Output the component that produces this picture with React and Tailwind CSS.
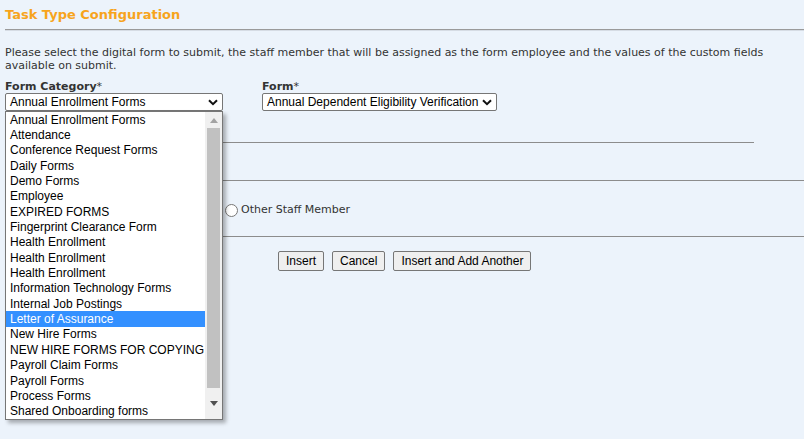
import { useState } from "react";

const categories = [
  "Annual Enrollment Forms",
  "Attendance",
  "Conference Request Forms",
  "Daily Forms",
  "Demo Forms",
  "Employee",
  "EXPIRED FORMS",
  "Fingerprint Clearance Form",
  "Health Enrollment",
  "Health Enrollment",
  "Health Enrollment",
  "Information Technology Forms",
  "Internal Job Postings",
  "Letter of Assurance",
  "New Hire Forms",
  "NEW HIRE FORMS FOR COPYING",
  "Payroll Claim Forms",
  "Payroll Forms",
  "Process Forms",
  "Shared Onboarding forms",
];

const arial = { fontFamily: '"Liberation Sans", Arial, sans-serif' };

function Chevron() {
  return (
    <svg width="10" height="7" viewBox="0 0 10 7" className="shrink-0">
      <path d="M1 1.2 L5 5.2 L9 1.2" fill="none" stroke="#111" strokeWidth="2" />
    </svg>
  );
}

function FakeSelect({ value, width }) {
  return (
    <div
      className={`flex h-[18px] items-center justify-between gap-[4px] rounded-[2px] border border-[#767676] bg-white pl-[4px] pr-[4px] text-[12px] leading-none text-black ${width}`}
      style={arial}
    >
      <span className="whitespace-nowrap">{value}</span>
      <Chevron />
    </div>
  );
}

function DropdownList({ highlighted }) {
  return (
    <div
      className="absolute left-0 top-[18px] z-10 flex h-[309px] w-[218px] border border-[#767676] bg-white shadow-[3px_3px_4px_rgba(0,0,0,0.3)]"
      style={arial}
    >
      <div className="flex flex-1 flex-col">
        {categories.map((c, i) => (
          <div
            key={i}
            className={`flex h-[15.35px] items-center whitespace-nowrap pl-[4px] text-[12px] leading-none ${
              i === highlighted ? "bg-[#3390ff] text-white" : "text-black"
            }`}
          >
            {c}
          </div>
        ))}
      </div>
      <div className="flex w-[17px] flex-col bg-[#f0f0f0]">
        <div className="flex h-[16px] items-center justify-center">
          <svg width="8" height="5" viewBox="0 0 8 5">
            <path d="M0 5 L4 0 L8 5 Z" fill="#a3a3a3" />
          </svg>
        </div>
        <div className="mx-[2px] h-[260px] bg-[#c1c1c1]" />
        <div className="flex flex-1 items-center justify-center">
          <svg width="8" height="5" viewBox="0 0 8 5">
            <path d="M0 0 L8 0 L4 5 Z" fill="#505050" />
          </svg>
        </div>
      </div>
    </div>
  );
}

function Button({ children }) {
  return (
    <button
      type="button"
      className="h-[20px] rounded-[2px] border border-[#767676] bg-[#efefef] px-[7px] text-[12px] leading-none text-black"
      style={arial}
    >
      {children}
    </button>
  );
}

export default function App() {
  const [staff, setStaff] = useState("current");

  return (
    <div
      className="h-[439px] w-[804px] overflow-hidden bg-[#ecf3fb] text-[11px] text-[#333]"
      style={{ fontFamily: '"DejaVu Sans", Verdana, sans-serif' }}
    >
      <div className="px-[5px] pt-[7px]">
        <h1 className="text-[13px] font-bold leading-[16px] text-[#f7a41d]">
          Task Type Configuration
        </h1>
      </div>
      <div className="ml-[5px] mt-[6px] h-[2px] border-t border-[#9a9a9a] bg-[#d6dce4]" />

      <p className="mt-[15px] px-[5px] leading-[13px]">
        Please select the digital form to submit, the staff member that will be
        assigned as the form employee and the values of the custom fields
        available on submit.
      </p>

      <div className="mt-[8px] flex gap-[39px] px-[5px]">
        <div>
          <div className="font-bold leading-[13px] text-[#333]">
            Form Category<span className="font-normal">*</span>
          </div>
          <div className="relative">
            <FakeSelect value="Annual Enrollment Forms" width="w-[218px]" />
            <DropdownList highlighted={13} />
          </div>
        </div>
        <div>
          <div className="font-bold leading-[13px] text-[#333]">
            Form<span className="font-normal">*</span>
          </div>
          <FakeSelect value="Annual Dependent Eligibility Verification" />
        </div>
      </div>

      <div className="ml-[5px] mt-[31px] w-[749px] border-t border-[#8c8c8c]" />

      <div className="ml-[5px] mt-[37px] border-t border-[#8c8c8c]" />

      <div className="flex h-[55px] items-center pl-[5px] pt-[4px]">
        <div className="flex w-[220px] items-center">
          <input
            type="radio"
            name="staff"
            checked={staff === "current"}
            onChange={() => setStaff("current")}
            className="m-0 h-[13px] w-[13px]"
          />
        </div>
        <label className="flex items-center gap-[3px]">
          <input
            type="radio"
            name="staff"
            checked={staff === "other"}
            onChange={() => setStaff("other")}
            className="m-0 h-[13px] w-[13px]"
          />
          <span>Other Staff Member</span>
        </label>
      </div>

      <div className="ml-[5px] border-t border-[#8c8c8c]" />

      <div className="mt-[14px] flex gap-[8px] pl-[278px]">
        <Button>Insert</Button>
        <Button>Cancel</Button>
        <Button>Insert and Add Another</Button>
      </div>
    </div>
  );
}
